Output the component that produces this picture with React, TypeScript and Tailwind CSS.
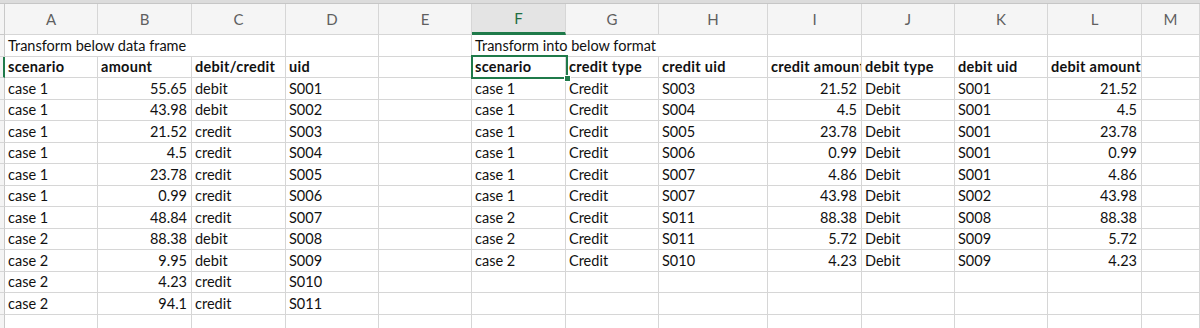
import React from 'react';

const columns = ['A', 'B', 'C', 'D', 'E', 'F', 'G', 'H', 'I', 'J', 'K', 'L', 'M'];

type Cell = { text: string; align?: 'left' | 'right'; bold?: boolean; span?: number };

const l = (text: string): Cell => ({ text });
const r = (text: string): Cell => ({ text, align: 'right' });
const b = (text: string): Cell => ({ text, bold: true });
const empty = (): Cell => ({ text: '' });

const source = [
  ['case 1', '55.65', 'debit', 'S001'],
  ['case 1', '43.98', 'debit', 'S002'],
  ['case 1', '21.52', 'credit', 'S003'],
  ['case 1', '4.5', 'credit', 'S004'],
  ['case 1', '23.78', 'credit', 'S005'],
  ['case 1', '0.99', 'credit', 'S006'],
  ['case 1', '48.84', 'credit', 'S007'],
  ['case 2', '88.38', 'debit', 'S008'],
  ['case 2', '9.95', 'debit', 'S009'],
  ['case 2', '4.23', 'credit', 'S010'],
  ['case 2', '94.1', 'credit', 'S011'],
];

const target = [
  ['case 1', 'Credit', 'S003', '21.52', 'Debit', 'S001', '21.52'],
  ['case 1', 'Credit', 'S004', '4.5', 'Debit', 'S001', '4.5'],
  ['case 1', 'Credit', 'S005', '23.78', 'Debit', 'S001', '23.78'],
  ['case 1', 'Credit', 'S006', '0.99', 'Debit', 'S001', '0.99'],
  ['case 1', 'Credit', 'S007', '4.86', 'Debit', 'S001', '4.86'],
  ['case 1', 'Credit', 'S007', '43.98', 'Debit', 'S002', '43.98'],
  ['case 2', 'Credit', 'S011', '88.38', 'Debit', 'S008', '88.38'],
  ['case 2', 'Credit', 'S011', '5.72', 'Debit', 'S009', '5.72'],
  ['case 2', 'Credit', 'S010', '4.23', 'Debit', 'S009', '4.23'],
];

// first row: the two titles run over the empty cells beside them
const rows: Cell[][] = [
  [
    { text: 'Transform below data frame', span: 3 },
    empty(),
    empty(),
    { text: 'Transform into below format', span: 3 },
    empty(),
    empty(),
    empty(),
    empty(),
    empty(),
  ],
  [
    b('scenario'), b('amount'), b('debit/credit'), b('uid'), empty(),
    b('scenario'), b('credit type'), b('credit uid'), b('credit amount'),
    b('debit type'), b('debit uid'), b('debit amount'), empty(),
  ],
];

for (let i = 0; i < 12; i++) {
  const s = source[i];
  const t = target[i];
  const row: Cell[] = [];
  if (s) row.push(l(s[0]), r(s[1]), l(s[2]), l(s[3]));
  else row.push(empty(), empty(), empty(), empty());
  row.push(empty());
  if (t) row.push(l(t[0]), l(t[1]), l(t[2]), r(t[3]), l(t[4]), l(t[5]), r(t[6]));
  else for (let k = 0; k < 7; k++) row.push(empty());
  row.push(empty());
  rows.push(row);
}

const App = () => {
  return (
    <div className="relative w-[1200px] h-[328px] overflow-hidden bg-white font-['Lato',sans-serif] text-[14.5px] text-[#111]">
      <div className="h-[4px] bg-[#dcdcdc] border-b border-[#c6c6c6]" />
      <div className="grid grid-cols-[5px_93px_94px_94px_93px_93px_94px_93px_109px_94px_93px_93px_94px_58px]">
        <div className="h-[31px] bg-[#f4f4f4] border-r border-b border-[#c9c9c9]" />
        {columns.map((c) =>
          c === 'F' ? (
            <div
              key={c}
              className="h-[31px] flex items-center justify-center border-r border-[#d6d6d6] border-b-[3px] border-b-[#1f7a4a] bg-[#e4e4e4] text-[15px] text-[#1f6e43]"
            >
              {c}
            </div>
          ) : (
            <div
              key={c}
              className="h-[31px] flex items-center justify-center border-r border-b border-[#d6d6d6] bg-[#f5f5f5] text-[15px] text-[#5f5f5f]"
            >
              {c}
            </div>
          )
        )}

        {rows.map((row, ri) => (
          <React.Fragment key={ri}>
            <div
              className={`h-[21.5px] bg-[#f4f4f4] border-b border-[#d6d6d6] ${
                ri === 1 ? 'border-r-[2px] border-r-[#1f7a4a]' : 'border-r border-r-[#c9c9c9]'
              }`}
            />
            {row.map((cell, ci) => (
              <div
                key={ci}
                className={`h-[21.5px] flex items-center pl-[3px] pr-[4px] border-r border-b border-[#d6d6d6] whitespace-nowrap ${
                  ri === 1 && ci === 11 ? 'overflow-visible' : 'overflow-hidden'
                } ${cell.span === 3 ? 'col-span-3' : ''} ${cell.align === 'right' ? 'justify-end' : ''} ${
                  cell.bold ? 'font-bold tracking-[0.3px]' : ''
                }`}
              >
                <span className="pt-[1px]">{cell.text}</span>
              </div>
            ))}
          </React.Fragment>
        ))}
      </div>

      {/* selected cell F2 */}
      <div className="pointer-events-none absolute left-[471px] top-[55px] w-[97px] h-[24px] border-2 border-[#1f7a4a]">
        <div className="absolute -right-[5px] -bottom-[5px] w-[7px] h-[7px] bg-[#1f7a4a] border border-white" />
      </div>
    </div>
  );
};

export default App;
